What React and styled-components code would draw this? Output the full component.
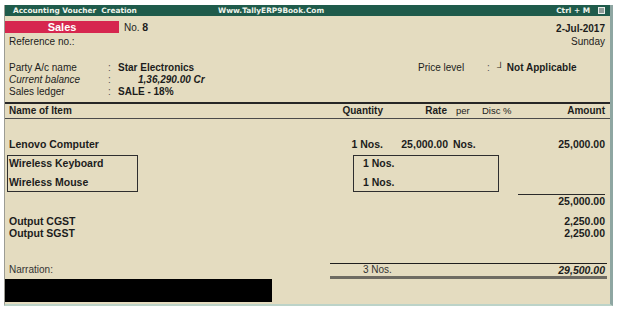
import React from 'react';
import styled, { createGlobalStyle } from 'styled-components';

const Global = createGlobalStyle`
  html, body { margin: 0; padding: 0; background: #ffffff; }
  body { font-family: "Liberation Sans", Arial, sans-serif; color: #1c1c1c; }
`;

const Window = styled.div`
  box-sizing: border-box;
  width: 609px;
  margin: 5px 0 0 4px;
  background: #e4dcc0;
  border-left: 1px solid #9c9c94;
  border-right: 3px solid #8ea6a2;
  border-bottom: 2px solid #bcd3c8;
  font-size: 10px;
  padding-bottom: 2px;
`;

const TitleBar = styled.div`
  height: 11px;
  background: #1f5b4b;
  color: #eef3ea;
  display: flex;
  align-items: center;
  font-family: "DejaVu Sans", sans-serif;
  font-weight: bold;
  font-size: 7.4px;
  padding: 0 5px 0 8px;
  white-space: pre;
`;

const TitleText = styled.span`
  width: 205px;
`;

const Spacer = styled.span`
  flex: 1;
`;

const CloseBox = styled.span`
  box-sizing: border-box;
  width: 7px;
  height: 7px;
  margin-left: 8px;
  border: 1px solid #e8ece8;
  background: #8f9c98;
`;

const Body = styled.div`
  padding-top: 5px;
`;

const TopRow = styled.div`
  display: flex;
  align-items: flex-start;
  height: 12px;
  line-height: 12px;
`;

const RedBar = styled.div`
  width: 114px;
  height: 12px;
  background: #d6274f;
  color: #ffffff;
  font-weight: bold;
  font-size: 11px;
  text-align: center;
`;

const VoucherNo = styled.div`
  margin-left: 5px;
  font-size: 10px;
  b { font-size: 10.5px; }
`;

const DateText = styled.div`
  margin-left: auto;
  margin-top: 2px;
  padding-right: 5px;
  font-weight: bold;
  font-size: 10px;
`;

const InfoRow = styled.div`
  display: flex;
  justify-content: space-between;
  height: 12px;
  line-height: 12px;
  margin-top: ${p => p.$mt || 0}px;
  padding: 0 5px 0 4px;
`;

const PartyGrid = styled.div`
  display: grid;
  grid-template-columns: 99px 10px 300px 69px 10px 1fr;
  grid-auto-rows: 12px;
  line-height: 12px;
  margin-top: 14px;
  padding-left: 4px;
`;

const Label = styled.span`
  font-style: ${p => (p.$italic ? 'italic' : 'normal')};
`;

const Colon = styled.span`
  color: #555;
`;

const Value = styled.span`
  font-weight: bold;
  font-size: 10px;
  font-style: ${p => (p.$italic ? 'italic' : 'normal')};
  padding-left: ${p => p.$indent || 0}px;
  white-space: nowrap;
`;

const ItemGrid = styled.div`
  display: grid;
  grid-template-columns: 333px 45px 65px 26px 46px 1fr;
  height: ${p => p.$h || 12}px;
  line-height: ${p => p.$h || 12}px;
  margin-top: ${p => p.$mt || 0}px;
  padding-right: 5px;
  white-space: nowrap;
`;

const HeaderGrid = styled(ItemGrid)`
  border-top: 2px solid #262626;
  border-bottom: 1px solid #4a4a4a;
`;

const Cell = styled.span`
  text-align: ${p => p.$align || 'left'};
  font-weight: ${p => (p.$bold ? 'bold' : 'normal')};
  font-size: ${p => (p.$bold ? '10.5px' : '10px')};
  padding-left: ${p => p.$pl || 0}px;
  padding-right: ${p => p.$pr || 0}px;
`;

const HeadCell = styled(Cell)`
  font-size: ${p => (p.$bold ? '10px' : '9.5px')};
`;

const GroupRow = styled.div`
  display: flex;
  height: 37px;
  margin-top: 5px;
`;

const FrameBox = styled.div`
  box-sizing: border-box;
  width: ${p => p.$w}px;
  margin-left: ${p => p.$ml}px;
  border: 1px solid #2e2e2e;
  padding: 1px 0 0 ${p => p.$pl}px;
  display: flex;
  flex-direction: column;
  gap: 7px;
`;

const FrameLine = styled.span`
  height: 12px;
  line-height: 12px;
  font-weight: bold;
  font-size: 10.5px;
  white-space: nowrap;
`;

const SubTotal = styled.div`
  margin: 2px 5px 0 513px;
  border-top: 1px solid #2a2a2a;
  height: 12px;
  line-height: 12px;
  text-align: right;
  font-weight: bold;
  font-size: 10.5px;
`;

const TaxRow = styled.div`
  display: flex;
  justify-content: space-between;
  height: 12px;
  line-height: 12px;
  margin-top: ${p => p.$mt || 0}px;
  padding: 0 5px 0 4px;
  font-weight: bold;
  font-size: 10.5px;
`;

const TotalRow = styled.div`
  display: flex;
  margin-top: 24px;
`;

const Narration = styled.span`
  padding: 1px 0 0 4px;
  line-height: 12px;
  color: #333;
`;

const TotalBox = styled.div`
  display: flex;
  width: 277px;
  margin: 0 3px 0 auto;
  border-top: 1px solid #1e1e1e;
  border-bottom: 3px solid #6e6b62;
  height: 12px;
  line-height: 12px;
`;

const TotalQty = styled.span`
  padding-left: 33px;
  color: #333;
`;

const TotalAmount = styled.span`
  margin-left: auto;
  padding-right: 2px;
  font-weight: bold;
  font-style: italic;
  font-size: 10.5px;
`;

const BlackBox = styled.div`
  width: 267px;
  height: 23px;
  background: #000000;
`;

export default function App() {
  return (
    <>
      <Global />
      <Window>
        <TitleBar>
          <TitleText>Accounting Voucher  Creation</TitleText>
          <span>Www.TallyERP9Book.Com</span>
          <Spacer />
          <span>Ctrl + M</span>
          <CloseBox />
        </TitleBar>
        <Body>
          <TopRow>
            <RedBar>Sales</RedBar>
            <VoucherNo>No. <b>8</b></VoucherNo>
            <DateText>2-Jul-2017</DateText>
          </TopRow>
          <InfoRow $mt={3}>
            <span>Reference no.:</span>
            <span>Sunday</span>
          </InfoRow>
          <PartyGrid>
            <Label>Party A/c name</Label>
            <Colon>:</Colon>
            <Value>Star Electronics</Value>
            <Label>Price level</Label>
            <Colon>:</Colon>
            <Value>┘ Not Applicable</Value>

            <Label $italic>Current balance</Label>
            <Colon>:</Colon>
            <Value $italic $indent={20}>1,36,290.00 Cr</Value>
            <span />
            <span />
            <span />

            <Label>Sales ledger</Label>
            <Colon>:</Colon>
            <Value>SALE - 18%</Value>
            <span />
            <span />
            <span />
          </PartyGrid>

          <HeaderGrid $h={14} $mt={4}>
            <HeadCell $bold $pl={4}>Name of Item</HeadCell>
            <HeadCell $bold $align="right">Quantity</HeadCell>
            <HeadCell $bold $align="right" $pr={1}>Rate</HeadCell>
            <HeadCell $pl={8}>per</HeadCell>
            <HeadCell $pl={8}>Disc %</HeadCell>
            <HeadCell $bold $align="right">Amount</HeadCell>
          </HeaderGrid>

          <ItemGrid $mt={19}>
            <Cell $bold $pl={4}>Lenovo Computer</Cell>
            <Cell $bold $align="right">1 Nos.</Cell>
            <Cell $bold $align="right">25,000.00</Cell>
            <Cell $bold $pl={5}>Nos.</Cell>
            <span />
            <Cell $bold $align="right">25,000.00</Cell>
          </ItemGrid>

          <GroupRow>
            <FrameBox $w={131} $ml={2} $pl={1}>
              <FrameLine>Wireless Keyboard</FrameLine>
              <FrameLine>Wireless Mouse</FrameLine>
            </FrameBox>
            <FrameBox $w={146} $ml={215} $pl={9}>
              <FrameLine>1 Nos.</FrameLine>
              <FrameLine>1 Nos.</FrameLine>
            </FrameBox>
          </GroupRow>

          <SubTotal>25,000.00</SubTotal>

          <TaxRow $mt={8}>
            <span>Output CGST</span>
            <span>2,250.00</span>
          </TaxRow>
          <TaxRow>
            <span>Output SGST</span>
            <span>2,250.00</span>
          </TaxRow>

          <TotalRow>
            <Narration>Narration:</Narration>
            <TotalBox>
              <TotalQty>3 Nos.</TotalQty>
              <TotalAmount>29,500.00</TotalAmount>
            </TotalBox>
          </TotalRow>
          <BlackBox />
        </Body>
      </Window>
    </>
  );
}
